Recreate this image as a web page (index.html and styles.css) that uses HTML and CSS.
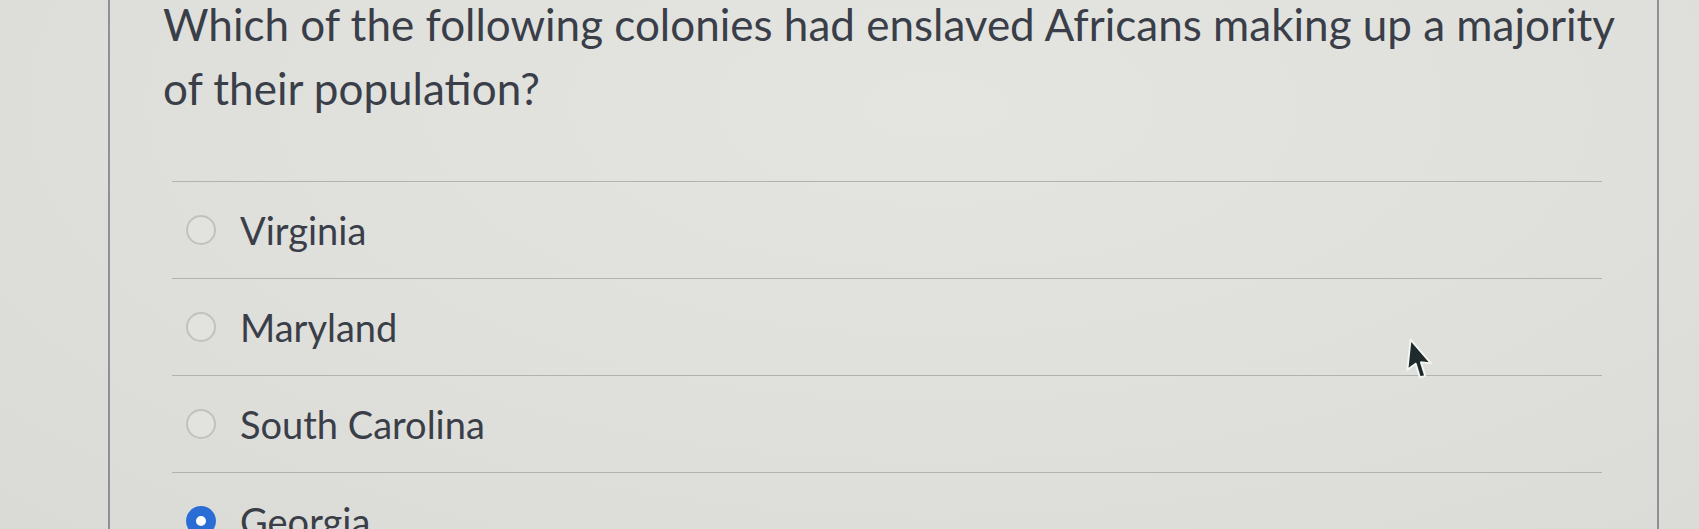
FILE: index.html
```html
<!DOCTYPE html>
<html lang="en">
<head>
<meta charset="utf-8">
<title>Quiz question</title>
<link rel="stylesheet" href="styles.css">
</head>
<body>
<div class="screen">
  <div class="gutter"></div>
  <main class="card">
    <div class="question">Which of the following colonies had enslaved Africans making up a majority of their population?</div>
    <ul class="answers">
      <li class="answer"><span class="radio"></span><span class="label">Virginia</span></li>
      <li class="answer"><span class="radio"></span><span class="label">Maryland</span></li>
      <li class="answer"><span class="radio"></span><span class="label">South Carolina</span></li>
      <li class="answer"><span class="radio checked"></span><span class="label">Georgia</span></li>
    </ul>
  </main>
  <div class="gutter-right"></div>
  <svg class="cursor" width="28" height="43" viewBox="0 0 22 34" aria-hidden="true">
    <path d="M2 2 L2 26 L8 20.5 L12.5 31 L16.5 29.3 L12 19 L20 19 Z" fill="#1e2a2c" stroke="#f4f6f4" stroke-width="1.5" stroke-linejoin="round"/>
  </svg>
</div>
</body>
</html>
```
FILE: styles.css
```css
html, body {
  margin: 0;
  padding: 0;
}
body {
  width: 1699px;
  height: 529px;
  overflow: hidden;
  background: #e0e1dd;
  font-family: "Lato", "Open Sans", sans-serif;
  color: #3a3e48;
}
.screen {
  position: relative;
  display: flex;
  width: 1699px;
  height: 529px;
  background: radial-gradient(ellipse at 55% 20%, #e4e5e1 0%, #dfe0dc 55%, #dadbd7 100%);
}
.gutter {
  width: 108px;
  flex: none;
}
.card {
  width: 1551px;
  flex: none;
  border-left: 2px solid #8d9097;
  border-right: 2px solid #8d9097;
  box-sizing: border-box;
  padding: 0 55px 0 62px;
}
.gutter-right {
  flex: 1;
}
.question {
  margin: -8px 0 0 -9px;
  font-size: 44px;
  line-height: 64px;
  width: 1470px;
}
.answers {
  list-style: none;
  margin: 61px 0 0 0;
  padding: 0;
}
.answer {
  display: flex;
  align-items: flex-start;
  border-top: 1.5px solid #b1b3b1;
  padding: 26px 0 25px 14px;
  font-size: 38px;
  line-height: 45px;
}
.radio {
  width: 30px;
  height: 30px;
  box-sizing: border-box;
  border: 2px solid #c1c2bf;
  border-radius: 50%;
  margin-top: 7px;
  flex: none;
  background: #e2e3df;
}
.radio.checked {
  border: 10px solid #2a6dd4;
  background: #ffffff;
}
.label {
  margin-left: 24px;
}
.cursor {
  position: absolute;
  left: 1408px;
  top: 337px;
  transform: rotate(6deg);
  transform-origin: 2px 2px;
}
```
